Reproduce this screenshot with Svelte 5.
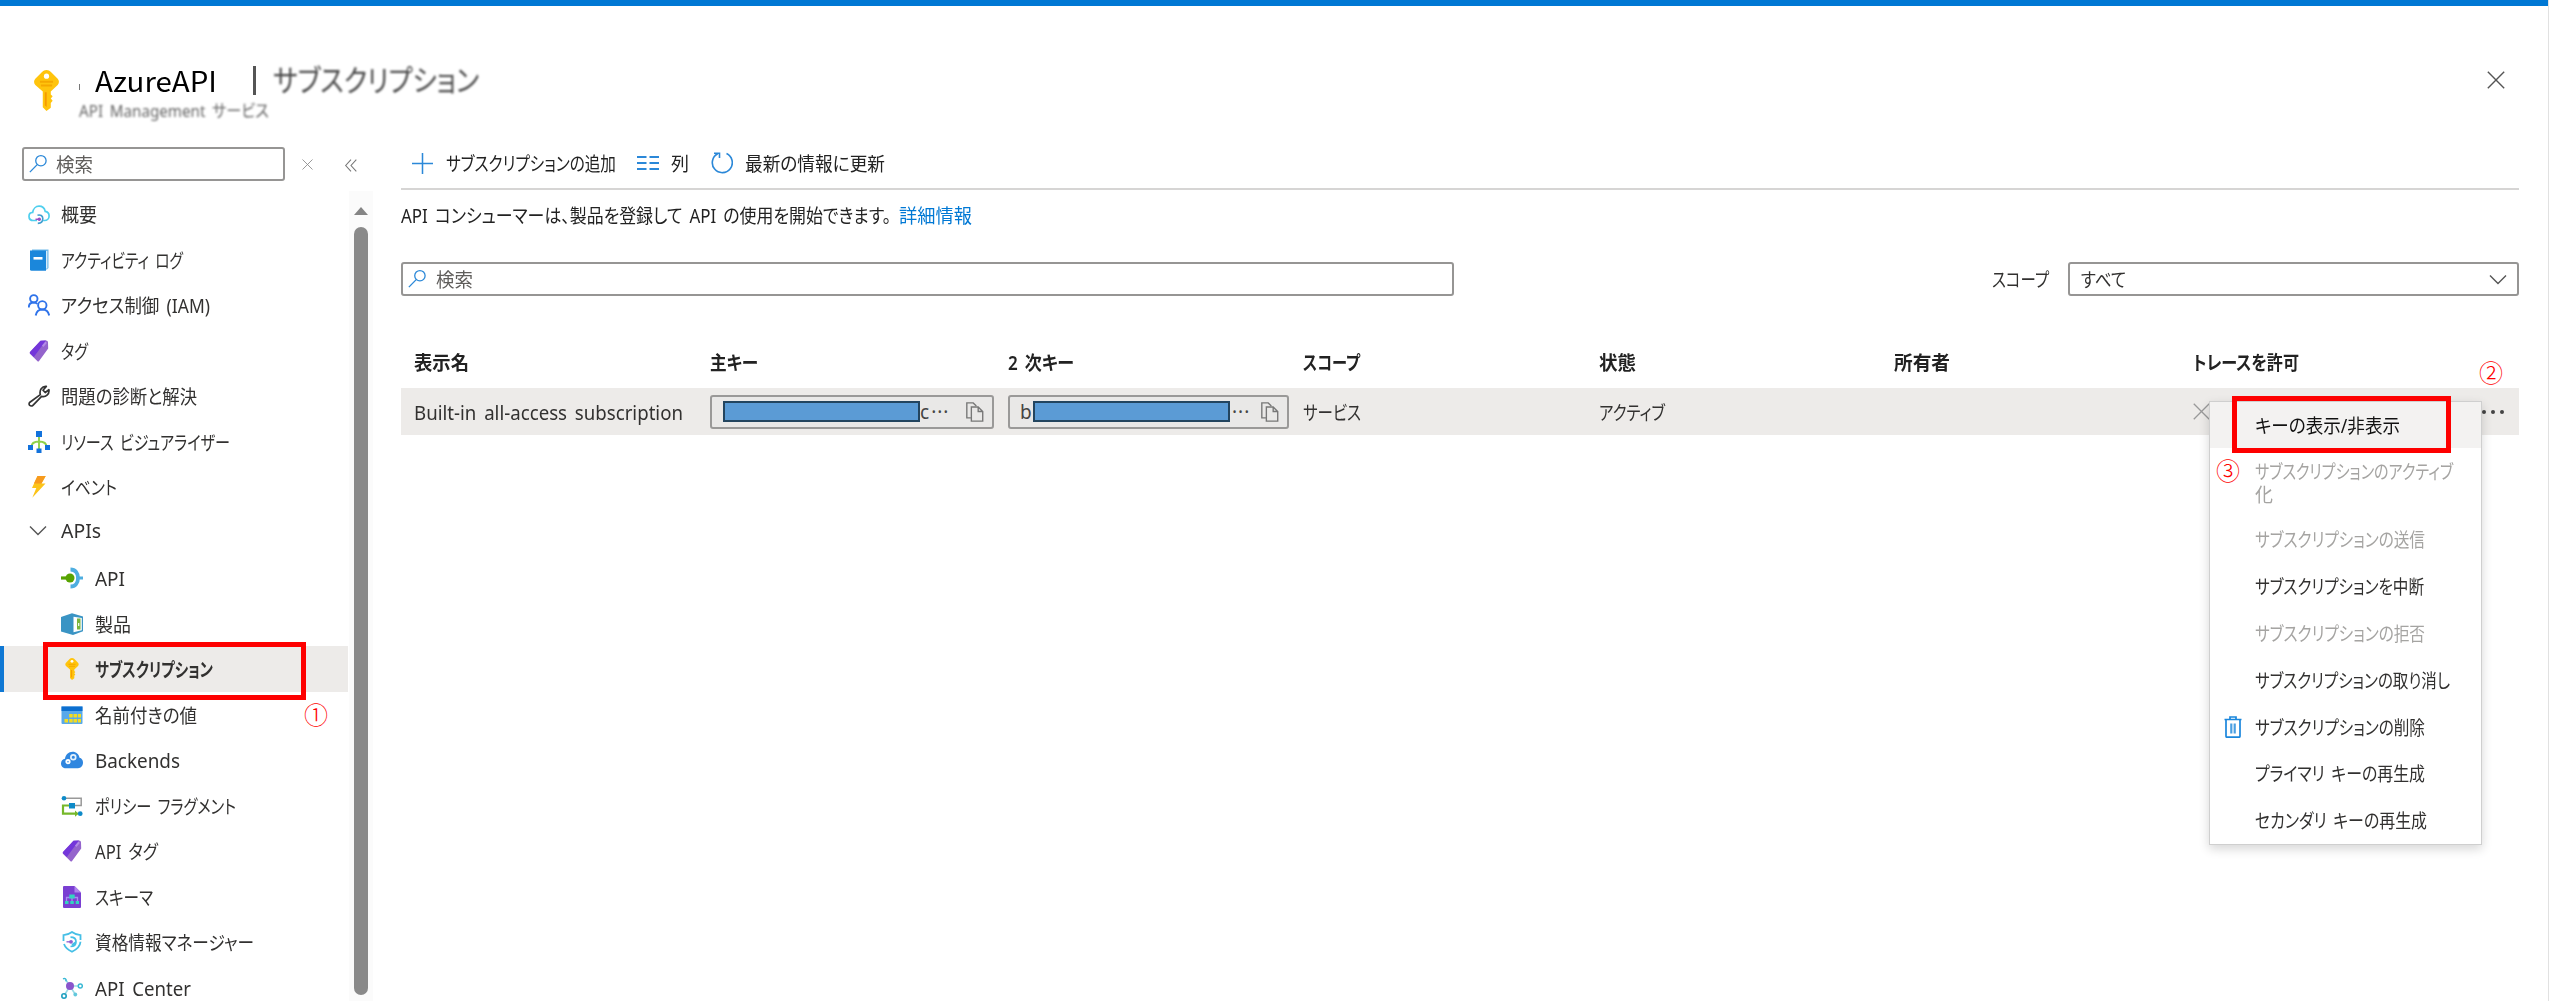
<!-- App.svelte -->
<script>
  const navItems = [
    { icon: 'cloud', label: '概要', width: 36 },
    { icon: 'book', label: 'アクティビティ ログ', width: 122 },
    { icon: 'people', label: 'アクセス制御 (IAM)', width: 149 },
    { icon: 'tag', label: 'タグ', width: 27 },
    { icon: 'wrench', label: '問題の診断と解決', width: 136 },
    { icon: 'tree', label: 'リソース ビジュアライザー', width: 169 },
    { icon: 'bolt', label: 'イベント', width: 56 },
    { icon: 'chevron', label: 'APIs', width: 40, group: true },
    { icon: 'api', label: 'API', width: 30, sub: true },
    { icon: 'product', label: '製品', width: 36, sub: true },
    { icon: 'key', label: 'サブスクリプション', width: 118, sub: true, selected: true },
    { icon: 'table', label: '名前付きの値', width: 102, sub: true },
    { icon: 'backend', label: 'Backends', width: 85, sub: true },
    { icon: 'policy', label: 'ポリシー フラグメント', width: 141, sub: true },
    { icon: 'tag', label: 'API タグ', width: 63, sub: true },
    { icon: 'schema', label: 'スキーマ', width: 58, sub: true },
    { icon: 'shield', label: '資格情報マネージャー', width: 159, sub: true },
    { icon: 'center', label: 'API Center', width: 96, sub: true }
  ];

  const columns = [
    { label: '表示名', width: 55 },
    { label: '主キー', width: 48 },
    { label: '2 次キー', width: 66 },
    { label: 'スコープ', width: 57 },
    { label: '状態', width: 37 },
    { label: '所有者', width: 56 },
    { label: 'トレースを許可', width: 106 }
  ];

  const menuItems = [
    { label: 'サブスクリプションの送信', width: 170, disabled: true },
    { label: 'サブスクリプションを中断', width: 169 },
    { label: 'サブスクリプションの拒否', width: 170, disabled: true },
    { label: 'サブスクリプションの取り消し', width: 195 },
    { label: 'サブスクリプションの削除', width: 170, icon: 'trash' },
    { label: 'プライマリ キーの再生成', width: 170 },
    { label: 'セカンダリ キーの再生成', width: 172 }
  ];

  // Condense a label horizontally so that it takes exactly the given width
  function fit(node, width) {
    const natural = node.getBoundingClientRect().width;
    if (!natural) return;
    node.style.transform = `scaleX(${width / natural})`;
    node.style.marginRight = `${width - natural}px`;
  }
</script>

{#snippet text(label, width)}
  <span class="label" use:fit={width}>{label}</span>
{/snippet}

{#snippet icon(name)}
  <svg class="icon icon-{name}" viewBox="0 0 22 22" fill="none" aria-hidden="true">
    {#if name === 'cloud'}
      <path d="M9 17.5H5.500C3 17.500 1 16 1 13.400c0-2.300 1.600-3.900 3.700-4C5.200 6 7.700 3.200 11 3.200c3.300 0 5.600 2.100 6.200 5.200 2.200.3 3.900 2 3.900 4.500 0 2.700-2 4.600-4.600 4.600h-1.300" stroke="#4fcfee" stroke-width="1.7" />
      <path d="M9.500 12.200c3-.8 5.300.6 5.300 3.200 0 2.700-2 4.800-5 5" stroke="#3f9fd0" stroke-width="1.6" />
      <path d="M7.500 16.300h4" stroke="#9b4fc4" stroke-width="1.5" />
      <circle cx="11.3" cy="16.3" r="1.7" fill="#9b4fc4" />
    {:else if name === 'book'}
      <path d="M4 0.500h16.500v18.500l-1.500 1.500H4z" fill="#6fb9ea" />
      <path d="M18.700 2v17.500" stroke="#e3f2fc" stroke-width="1.2" />
      <path d="M2 1.500h16v20.300H3.500A1.500 1.500 0 0 1 2 20.300z" fill="#1b87db" />
      <path d="M5.500 8h9v2.600h-9z" fill="#fff" />
    {:else if name === 'people'}
      <g stroke="#2f73ea" stroke-width="1.9">
        <circle cx="5.8" cy="4.8" r="3.7" />
        <path d="M.8 13.500c0-3 1.800-5 5-5 1.500 0 2.800.6 3.600 1.400" />
        <circle cx="14.3" cy="11.3" r="4.2" />
        <path d="M7.700 21.500c.6-3.600 3-6 6.600-6s6.200 2.400 6.900 6" />
      </g>
    {:else if name === 'tag'}
      <path d="M12.500.8 18 .5c1.200 0 2 .8 2 2l.2 6-9.300 12.700c-.4.5-1 .5-1.400.1L2.200 14c-.6-.6-.6-1.200-.1-1.800z" fill="#9464cc" />
      <path d="M12.500.8 18 .5 5.800 17 2.200 13.500c-.6-.6-.6-1.200-.1-1.800z" fill="#7436da" />
      <path d="M14 5.500 17.500 1.500l1.300 1.500-3.400 4z" fill="#b48be8" />
    {:else if name === 'wrench'}
      <path d="M12.300 9.600C11.200 5.300 13.800 1 18.300 1.400l-3.300 3.800 2.200 2.300 3.700-2.800c.7 4.500-3.200 7.900-7.300 6.700l-8.700 8.900c-1 1-2.400.9-3.200 0-.9-.9-.8-2.200.2-3.100z" stroke="#333" stroke-width="1.7" stroke-linejoin="round" />
    {:else if name === 'tree'}
      <path d="M11 6v12M3.500 16c0-3.500 3-5.500 7.500-5.500s7.500 2 7.500 5.500" stroke="#8fd24a" stroke-width="1.9" />
      <path d="M8 0h6v6H8zM0 14h5v5H0zM8.500 17.500h5v4.500h-5zM17 14h5v5h-5z" fill="#1272dc" />
    {:else if name === 'bolt'}
      <path d="M9.500 0h8.200l-4.200 7.500h4L4.300 21.800 8.300 12H4z" fill="#fcc419" />
      <path d="M9.500 0h8.200l-4.200 7.500H5.900z" fill="#f79a1e" />
    {:else if name === 'chevron'}
      <path d="M2 7.500 10 15.500 18 7.500" stroke="#555" stroke-width="1.4" />
    {:else if name === 'api'}
      <path d="M9.500 2.500c5 0 7.500 3.800 7.500 8.500s-2.500 8.500-7.500 8.500" stroke="#4eaee0" stroke-width="3.8" />
      <path d="M18 11h4" stroke="#4eaee0" stroke-width="3" />
      <circle cx="9" cy="11" r="5.800" fill="#fff" />
      <path d="M0 11h7" stroke="#57a300" stroke-width="3.2" />
      <circle cx="9" cy="11" r="4.5" fill="#57a300" />
    {:else if name === 'product'}
      <path d="M0 4 11 .3 22 3.500v14.800L12 22 0 18.500z" fill="#3a94c4" />
      <path d="M12.500 3.800 20.800 5v12.300l-8.300 2z" fill="#fff" />
      <path d="M16 5.500h3.500v11H16z" fill="#7ab53c" />
      <path d="M17.700 10v3" stroke="#fff" stroke-width="1.2" />
    {:else if name === 'key'}
      <path d="M11 0c1 0 1.700.4 2.400 1.100L17 4.700c.9.9.9 2.400 0 3.300L13.300 11.600v1.500l1 1-1 1.200 1 1.200-1 1.200v2.500L11 22l-2-2v-8.400L5 8c-.9-.9-.9-2.400 0-3.300l3.600-3.600C9.300.4 10 0 11 0z" fill="#ffc40d" />
      <path d="M10.100 12h1v7.800l-1-.8z" fill="#f59b00" />
      <path d="M7.500 6.300h7M8 8.300h6" stroke="#f5a800" stroke-width="1" />
      <circle cx="11" cy="3.300" r="1.4" fill="#fff" />
    {:else if name === 'table'}
      <path d="M.5 2.500h21V19a1 1 0 0 1-1 1h-19a1 1 0 0 1-1-1z" fill="#58a9ea" />
      <path d="M.5 2.500h21V7H.5z" fill="#0c6fd0" />
      <path d="M8.200 10h3.500v3.500H8.200zM12.500 10H16v3.500h-3.500zM16.800 10H20v3.500h-3.200zM3.500 15h3.500v3.500H3.500zM8.200 15h3.500v3.500H8.200zM12.500 15H16v3.500h-3.500zM16.800 15H20v3.500h-3.200z" fill="#f3dc20" />
    {:else if name === 'backend'}
      <path d="M5 19.300C2 19.300 0 17.200 0 14.500c0-2.600 1.700-4.300 4-4.700C4.500 5.800 7.500 2.800 11.500 2.800c3.700 0 6.400 2.400 7 5.900 2.200.5 3.500 2.300 3.500 4.900 0 3.300-2 5.700-5 5.700z" fill="#2f86df" />
      <circle cx="12.300" cy="8.300" r="2.400" stroke="#e4f1fc" stroke-width="1.700" />
      <circle cx="7" cy="12.700" r="1.700" stroke="#fff" stroke-width="1.800" />
    {:else if name === 'policy'}
      <path d="M4 3.200h16.200v7.300H13" stroke="#999" stroke-width="1.5" />
      <path d="M8 10.500H2v8.200h14.500" stroke="#76b82a" stroke-width="2.2" />
      <path d="m14 15.500 3.500 3.200-3.500 3z" fill="#76b82a" />
      <path d="M8 8h6v5.500H8z" fill="#0e8ac8" />
      <circle cx="3" cy="3.200" r="2.3" fill="#0e8ac8" />
      <circle cx="19.200" cy="18.700" r="2.4" fill="#0e8ac8" />
    {:else if name === 'schema'}
      <path d="M2 1a1 1 0 0 1 1-1h10.500l6.500 6.500V21a1 1 0 0 1-1 1H3a1 1 0 0 1-1-1z" fill="#7a3fd2" />
      <path d="M13.500 0 20 6.500h-6.500z" fill="#b083ee" />
      <path d="M5.500 16v-4.500h11V16M11 9v7" stroke="#a98cf0" stroke-width="1.3" />
      <path d="M8.300 8.500h5.400v4H8.300zM4 15h3.500v3H4zM9.300 15h3.500v3H9.300zM14.700 15H18v3h-3.300z" fill="#32d4c0" />
    {:else if name === 'shield'}
      <path d="M2.500 10V4.200C6 4 8.500 2.800 11 1c2.500 1.800 5 3 8.500 3.200V9M3 13c1.200 3.500 4.300 6 8 7.800 4.500-2.200 8.200-5.500 8.500-10" stroke="#45bfe6" stroke-width="1.8" />
      <path d="M9.500 6.200c3.500 0 5.500 2 5.500 4.600s-2 4.700-5.500 4.700M15 10.800 11 14" stroke="#45bfe6" stroke-width="1.7" />
      <path d="M5.500 10.800h4" stroke="#9a6fd8" stroke-width="1.5" />
      <circle cx="10" cy="10.800" r="1.9" fill="#8f5fd0" />
    {:else if name === 'center'}
      <path d="M9 9 4.500 2.500M9 9h8M9 9 3.500 18M9 9l5 8" stroke="#9adbe6" stroke-width="1.6" />
      <circle cx="9" cy="9" r="4" fill="#8a55cc" />
      <path d="M2 1.800c2-1 3.500.2 3 2.500" stroke="#38b8d4" stroke-width="1.4" />
      <circle cx="19.300" cy="9" r="2" stroke="#38b8d4" stroke-width="1.5" />
      <circle cx="3" cy="19" r="2.2" stroke="#1fa0c0" stroke-width="1.6" />
      <circle cx="14.300" cy="17.500" r="1.9" fill="#62c8dc" />
    {:else if name === 'search'}
      <circle cx="13.800" cy="7.800" r="6" stroke="#2b88d8" stroke-width="1.5" />
      <path d="M9.500 12.300 1 21" stroke="#2b88d8" stroke-width="1.6" />
    {:else if name === 'plus'}
      <path d="M11 0v22M0 11h22" stroke="#2b88d8" stroke-width="1.6" />
    {:else if name === 'columns'}
      <path d="M0 5h9.500M12.500 5H22M0 11h9.500M12.500 11H22M0 17h9.500M12.500 17H22" stroke="#2b88d8" stroke-width="1.9" />
    {:else if name === 'refresh'}
      <path d="M15.500 1.600A10 10 0 1 1 6.700 1.800" stroke="#2b88d8" stroke-width="1.6" />
      <path d="M3 1.200h5.500V6" stroke="#2b88d8" stroke-width="1.6" />
    {:else if name === 'close'}
      <path d="m1 1 20 20M21 1 1 21" stroke="currentColor" stroke-width="1.7" />
    {:else if name === 'collapse'}
      <path d="M11 1 2 11l9 10M20 1l-9 10 9 10" stroke="#777" stroke-width="1.8" />
    {:else if name === 'copy'}
      <path d="M6.500 17.500H2V1h7l3.500 3.500" stroke="#777" stroke-width="1.5" />
      <path d="M7 5.500h7.500l5 5V21H7zM14.500 5.500v5h5" stroke="#777" stroke-width="1.5" />
    {:else if name === 'trash'}
      <path d="M2.500 3.500h17M8 3.500V1h6v2.500M4 3.500v16.700c0 .6.4 1 1 1h12c.6 0 1-.4 1-1V3.500" stroke="#1a86dc" stroke-width="1.7" />
      <path d="M9.300 7.500v10M12.700 7.500v10" stroke="#4a9fe2" stroke-width="2.2" />
    {/if}
  </svg>
{/snippet}

<div class="portal">
  <div class="top-bar"></div>

  <header class="blade-header">
    <div class="resource-icon">{@render icon('key')}</div>
    <div class="titles">
      <h1>
        <span class="remnant"></span>
        <span class="resource-name">{@render text('AzureAPI', 122)}</span>
        <span class="divider"></span>
        <span class="page-name">{@render text('サブスクリプション', 206)}</span>
      </h1>
      <p>{@render text('API Management サービス', 190)}</p>
    </div>
    <button class="close" aria-label="閉じる">{@render icon('close')}</button>
  </header>

  <div class="body">
    <aside class="sidebar">
      <div class="sidebar-tools">
        <div class="search-box small">
          {@render icon('search')}
          {@render text('検索', 37)}
        </div>
        <span class="clear">{@render icon('close')}</span>
        {@render icon('collapse')}
      </div>

      <div class="nav-area">
        <nav>
          {#each navItems as item}
            <div class="nav-item" class:sub={item.sub} class:group={item.group} class:selected={item.selected}>
              {@render icon(item.icon)}
              {@render text(item.label, item.width)}
              {#if item.selected}
                <div class="highlight nav-highlight"></div>
                <span class="step step-one">①</span>
              {/if}
            </div>
          {/each}
        </nav>
        <div class="scrollbar">
          <div class="scroll-arrow"></div>
          <div class="scroll-thumb"></div>
        </div>
      </div>
    </aside>

    <main>
      <div class="toolbar">
        <span class="command add">{@render icon('plus')}{@render text('サブスクリプションの追加', 170)}</span>
        <span class="command cols">{@render icon('columns')}{@render text('列', 18)}</span>
        <span class="command">{@render icon('refresh')}{@render text('最新の情報に更新', 140)}</span>
      </div>

      <p class="description">
        {@render text('API コンシューマーは、製品を登録して API の使用を開始できます。', 490)}
        <span class="link">{@render text('詳細情報', 73)}</span>
      </p>

      <div class="filters">
        <div class="search-box large">
          {@render icon('search')}
          {@render text('検索', 37)}
        </div>
        <div class="scope">
          {@render text('スコープ', 57)}
          <div class="select">
            {@render text('すべて', 45)}
            {@render icon('chevron')}
          </div>
        </div>
      </div>

      <div class="grid head">
        {#each columns as column}
          <div>{@render text(column.label, column.width)}</div>
        {/each}
      </div>

      <div class="grid row">
        <div>{@render text('Built-in all-access subscription', 269)}</div>
        <div>
          <div class="key-field">
            <span class="mask"></span><span class="tail">c</span><span class="dots">···</span>
            {@render icon('copy')}
          </div>
        </div>
        <div>
          <div class="key-field second">
            <span class="lead">b</span><span class="mask"></span><span class="dots">···</span>
            {@render icon('copy')}
          </div>
        </div>
        <div>{@render text('サービス', 58)}</div>
        <div>{@render text('アクティブ', 66)}</div>
        <div></div>
        <div class="trace">
          {@render icon('close')}
          <span class="more"><i></i><i></i><i></i></span>
        </div>

        <span class="step step-two">②</span>

        <div class="menu">
          <div class="menu-item active">{@render text('キーの表示/非表示', 145)}</div>
          <div class="menu-item disabled two-line">
            {@render text('サブスクリプションのアクティブ', 198)}
            {@render text('化', 18)}
          </div>
          {#each menuItems as item}
            <div class="menu-item" class:disabled={item.disabled}>
              {#if item.icon}{@render icon(item.icon)}{/if}
              {@render text(item.label, item.width)}
            </div>
          {/each}
          <div class="highlight menu-highlight"></div>
          <span class="step step-three">③</span>
        </div>
      </div>
    </main>
  </div>
</div>

<style>
  :global(body) {
    margin: 0;
    overflow: hidden;
    background: #fff;
  }

  .portal {
    display: flex;
    flex-direction: column;
    width: 2549px;
    height: 1001px;
    overflow: hidden;
    border-right: 1px solid #e1e1e1;
    font-family: 'Noto Sans', 'Noto Sans CJK JP', sans-serif;
    font-size: 19px;
    line-height: 24px;
    color: #323130;
    font-feature-settings: 'palt';
  }

  .portal,
  .portal * {
    box-sizing: border-box;
  }

  .label {
    display: inline-block;
    flex: none;
    padding-top: 2px;
    white-space: pre;
    word-spacing: 3px;
    transform-origin: left center;
  }

  .icon {
    display: block;
    flex: none;
    width: 22px;
    height: 22px;
  }

  .top-bar {
    flex: none;
    height: 6px;
    background: #0078d4;
  }

  /* Header */
  .blade-header {
    display: flex;
    flex: none;
    height: 141px;
    padding: 53px 43px 0 26px;
  }

  .resource-icon {
    width: 53px;
    padding-top: 11px;
  }

  .resource-icon .icon {
    width: 41px;
    height: 41px;
  }

  h1 {
    display: flex;
    align-items: center;
    height: 40px;
    margin: 0;
    font-weight: 400;
  }

  .remnant {
    width: 1px;
    height: 6px;
    margin-top: 16px;
    background: #777;
  }

  .resource-name {
    padding: 0 36px 0 15px;
    font-family: 'Noto Sans CJK JP', sans-serif;
    font-size: 28px;
    line-height: 38px;
    color: #000;
  }

  .divider {
    width: 3px;
    height: 29px;
    margin-top: 3px;
    background: #555;
    filter: blur(0.6px);
  }

  .page-name {
    padding-left: 17px;
    font-size: 30px;
    line-height: 34px;
    color: #484848;
    filter: blur(0.8px);
  }

  .titles p {
    margin: 0;
    font-size: 17px;
    line-height: 20px;
    color: #666;
    filter: blur(0.8px);
  }

  .close {
    align-self: flex-start;
    margin: 12px 0 0 auto;
    padding: 0;
    border: 0;
    background: none;
    color: #555;
  }

  .close .icon {
    width: 18px;
    height: 18px;
  }

  .body {
    display: flex;
    flex: 1;
    min-height: 0;
  }

  /* Sidebar */
  .sidebar {
    width: 401px;
    flex: none;
  }

  .sidebar-tools {
    display: flex;
    align-items: center;
    height: 34px;
    padding-left: 22px;
  }

  .search-box {
    display: flex;
    align-items: center;
    height: 34px;
    border: 2px solid #969594;
    border-radius: 3px;
    color: #605e5c;
  }

  .search-box .icon {
    width: 19px;
    height: 19px;
    margin-bottom: 2px;
  }

  .small {
    width: 263px;
    padding: 0 5px;
    gap: 8px;
  }

  .clear {
    margin: 0 31px 0 17px;
    color: #888;
  }

  .clear .icon {
    width: 11px;
    height: 11px;
  }

  .icon-collapse {
    width: 14px;
    height: 13px;
    margin-top: 3px;
  }

  .nav-area {
    display: flex;
    margin-top: 10.25px;
    height: 810px;
  }

  nav {
    width: 348px;
  }

  .nav-item {
    position: relative;
    display: flex;
    align-items: center;
    gap: 11px;
    height: 45.5px;
    padding-left: 28px;
  }

  .nav-item.sub {
    padding-left: 61px;
    gap: 12px;
  }

  .nav-item.group {
    padding-bottom: 5px;
  }

  .nav-item.selected {
    padding-left: 57px;
    border-left: 4px solid #0f78d4;
    background: #edebe9;
    font-weight: 600;
  }

  .scrollbar {
    display: flex;
    flex-direction: column;
    align-items: center;
    width: 24px;
    margin-left: 1px;
    padding-top: 16px;
    background: #fbfbfb;
  }

  .scroll-arrow {
    border: 7px solid transparent;
    border-top: 0;
    border-bottom: 8px solid #858585;
  }

  .scroll-thumb {
    width: 14px;
    height: 768px;
    margin-top: 12px;
    border-radius: 7px;
    background: #8a8a8a;
  }

  /* Red walkthrough marks */
  .highlight {
    position: absolute;
    z-index: 2;
    border: 5px solid #fe0000;
  }

  .step {
    position: absolute;
    z-index: 2;
    font-family: 'Noto Sans CJK JP', sans-serif;
    font-size: 24px;
    font-weight: 300;
    line-height: 24px;
    color: #fe0000;
    font-feature-settings: normal;
  }

  .nav-highlight {
    left: 39px;
    top: -4px;
    width: 263px;
    height: 58px;
  }

  .step-one {
    left: 300px;
    top: 56px;
  }

  .step-two {
    left: 2078px;
    top: -28px;
  }

  .step-three {
    left: 6px;
    top: 56px;
  }

  .menu-highlight {
    left: 22px;
    top: -6px;
    width: 219px;
    height: 57px;
  }

  /* Main pane */
  main {
    width: 2118px;
  }

  .toolbar {
    display: flex;
    align-items: center;
    height: 43px;
    padding: 0 0 9px 11px;
    border-bottom: 2px solid #d6d5d4;
    color: #222;
  }

  .command {
    display: flex;
    align-items: center;
    gap: 12px;
  }

  .add {
    gap: 13px;
    margin-right: 21px;
  }

  .cols {
    margin-right: 22px;
  }

  .icon-plus {
    width: 21px;
    height: 21px;
  }

  .description {
    display: flex;
    align-items: center;
    gap: 8px;
    height: 50px;
    margin: 0;
    color: #222;
  }

  .link {
    color: #0078d4;
  }

  .filters {
    display: flex;
    justify-content: space-between;
    margin-top: 22px;
  }

  .large {
    width: 1053px;
    padding: 0 5px;
    gap: 9px;
  }

  .scope {
    display: flex;
    align-items: center;
    gap: 19px;
  }

  .select {
    display: flex;
    align-items: center;
    justify-content: space-between;
    width: 451px;
    height: 34px;
    padding: 0 7px 0 11px;
    border: 2px solid #969594;
    border-radius: 3px;
  }

  .grid {
    position: relative;
    display: grid;
    grid-template-columns: 296px 298px 295px 296px 295px 299px 1fr;
    align-items: center;
    padding-left: 13px;
  }

  .head {
    height: 52px;
    margin-top: 40px;
    font-weight: 600;
    color: #222;
  }

  .row {
    height: 47px;
    background: #edebe9;
  }

  .key-field {
    display: flex;
    align-items: center;
    width: 284px;
    height: 34px;
    padding: 0 7px 0 11px;
    border: 2px solid #9a9998;
    border-radius: 3px;
    background: #e9e8e7;
    color: #444;
  }

  .key-field.second {
    width: 281px;
    padding-left: 10px;
  }

  .key-field .icon {
    width: 20px;
    height: 20px;
    margin-left: auto;
  }

  .mask {
    width: 197px;
    height: 21px;
    border: 2px solid #23455f;
    background: #5b9bd5;
  }

  .lead {
    width: 13px;
  }

  .dots {
    padding-left: 2px;
    letter-spacing: 1px;
  }

  .trace {
    display: flex;
    align-items: center;
    justify-content: space-between;
    padding-right: 15px;
    color: #999;
  }

  .trace .icon {
    width: 17px;
    height: 17px;
  }

  .more {
    display: flex;
    gap: 5px;
  }

  .more i {
    width: 4px;
    height: 4px;
    border-radius: 50%;
    background: #444;
  }

  .menu {
    position: absolute;
    left: 1808px;
    top: 13px;
    width: 273px;
    height: 444px;
    border: 1px solid #cfcfcf;
    background: #fff;
    box-shadow: 0 4px 10px rgba(0, 0, 0, 0.16);
  }

  .menu-item {
    display: flex;
    align-items: center;
    height: 46.8px;
    padding-left: 45px;
  }

  .menu-item.active {
    height: 46px;
    background: #f3f2f1;
    color: #111;
  }

  .menu-item.disabled {
    color: #a5a4a2;
  }

  .menu-item.two-line {
    flex-direction: column;
    align-items: flex-start;
    height: 68px;
    padding-top: 12px;
    line-height: 22px;
  }

  .two-line .label {
    padding-top: 1px;
  }

  .menu-item .icon {
    margin: 0 11px 0 -33px;
  }
</style>
